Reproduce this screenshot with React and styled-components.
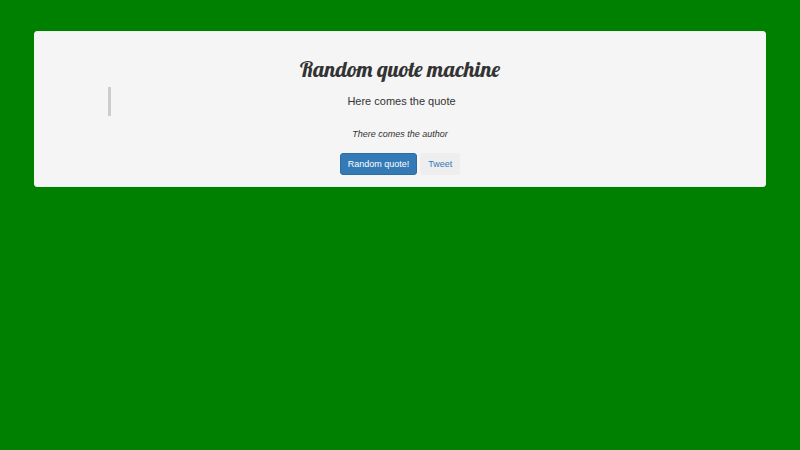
import React, { useState } from "react";
import styled, { createGlobalStyle, css } from "styled-components";

const GlobalStyle = createGlobalStyle`
  *, *::before, *::after { box-sizing: border-box; }
  body {
    margin: 0;
    background: #008000;
    color: #333;
    font-family: "Helvetica Neue", "Liberation Sans", Arial, sans-serif;
    font-size: 9px;
    line-height: 13px;
  }
`;

const Page = styled.main`
  padding: 31px 34px;
`;

const Well = styled.section`
  display: flex;
  flex-direction: column;
  padding: 24px 10% 11px;
  background: #f5f5f5;
  border: 1px solid #eef4ee;
  border-radius: 3px;
  text-align: center;
`;

const Title = styled.h1`
  margin: 0 0 4px;
  font-family: Lobster, "Liberation Serif", serif;
  font-size: 22px;
  font-weight: 500;
  line-height: 27px;
`;

const Quote = styled.blockquote`
  margin: 0 0 12px;
  padding: 6px 12px;
  border-left: 3px solid #ccc;
  font-size: 11px;
  line-height: 17px;
`;

const Author = styled.p`
  margin: 0 0 12px;
  font-style: italic;
`;

const Actions = styled.div`
  display: flex;
  justify-content: center;
  gap: 3px;
`;

const buttonBase = css`
  padding: 3px 7px;
  border: 1px solid;
  border-radius: 3px;
  font: inherit;
  line-height: 14px;
  text-decoration: none;
  cursor: pointer;
`;

const PrimaryButton = styled.button`
  ${buttonBase}
  color: #fff;
  background: #337ab7;
  border-color: #2e6da4;
`;

const TweetLink = styled.a`
  ${buttonBase}
  color: #337ab7;
  background: #eee;
  border-color: #eee;
`;

const quotes = [
  { text: "Here comes the quote", author: "There comes the author" },
  { text: "Simplicity is the soul of efficiency.", author: "Austin Freeman" },
  { text: "Well begun is half done.", author: "Aristotle" },
];

export default function App() {
  const [index, setIndex] = useState(0);
  const { text, author } = quotes[index];
  const tweet = encodeURIComponent(`${text} - ${author}`);

  return (
    <>
      <GlobalStyle />
      <Page>
        <Well>
          <Title>Random quote machine</Title>
          <Quote>{text}</Quote>
          <Author>{author}</Author>
          <Actions>
            <PrimaryButton type="button" onClick={() => setIndex((index + 1) % quotes.length)}>
              Random quote!
            </PrimaryButton>
            <TweetLink href={`https://twitter.com/intent/tweet?text=${tweet}`}>Tweet</TweetLink>
          </Actions>
        </Well>
      </Page>
    </>
  );
}
